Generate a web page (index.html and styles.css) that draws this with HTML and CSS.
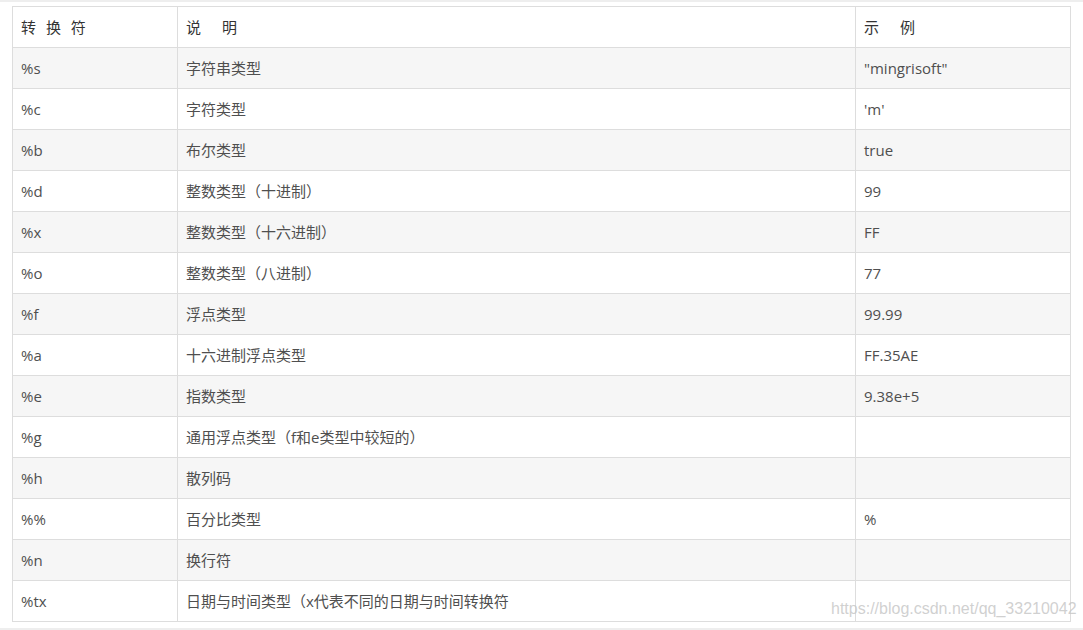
FILE: index.html
```html
<!DOCTYPE html>
<html lang="zh">
<head>
<meta charset="utf-8">
<link rel="stylesheet" href="styles.css">
</head>
<body>
<div class="page">
  <table class="fmt">
    <colgroup><col class="c1"><col class="c2"><col class="c3"></colgroup>
    <thead>
      <tr><th class="h1">转 换 符</th><th class="h2">说　 明</th><th class="h2">示　 例</th></tr>
    </thead>
    <tbody>
      <tr><td>%s</td><td>字符串类型</td><td>"mingrisoft"</td></tr>
      <tr><td>%c</td><td>字符类型</td><td>'m'</td></tr>
      <tr><td>%b</td><td>布尔类型</td><td>true</td></tr>
      <tr><td>%d</td><td>整数类型（十进制）</td><td>99</td></tr>
      <tr><td>%x</td><td>整数类型（十六进制）</td><td>FF</td></tr>
      <tr><td>%o</td><td>整数类型（八进制）</td><td>77</td></tr>
      <tr><td>%f</td><td>浮点类型</td><td>99.99</td></tr>
      <tr><td>%a</td><td>十六进制浮点类型</td><td>FF.35AE</td></tr>
      <tr><td>%e</td><td>指数类型</td><td>9.38e+5</td></tr>
      <tr><td>%g</td><td>通用浮点类型（f和e类型中较短的）</td><td></td></tr>
      <tr><td>%h</td><td>散列码</td><td></td></tr>
      <tr><td>%%</td><td>百分比类型</td><td>%</td></tr>
      <tr><td>%n</td><td>换行符</td><td></td></tr>
      <tr><td>%tx</td><td>日期与时间类型（x代表不同的日期与时间转换符</td><td></td></tr>
    </tbody>
  </table>
  <div class="watermark">https://blog.csdn.net/qq_33210042</div>
</div>
</body>
</html>
```

FILE: styles.css
```css
html, body {
  margin: 0;
  padding: 0;
  background: #ffffff;
}
.page {
  position: relative;
  width: 1083px;
  height: 630px;
  border-top: 2px solid #eeeeee;
  box-sizing: border-box;
  padding: 4px 0 0 12px;
}
.page::after {
  content: "";
  position: absolute;
  left: 0;
  right: 0;
  bottom: 0;
  height: 2px;
  background: #eeeeee;
}
.fmt {
  border-collapse: collapse;
  table-layout: fixed;
  width: 1058px;
  font-family: "Open Sans", "Noto Sans CJK SC", sans-serif;
  font-size: 15px;
  color: #4f4f4f;
}
.c1 { width: 165px; }
.c2 { width: 678px; }
.c3 { width: 215px; }
.fmt th, .fmt td {
  border: 1px solid #dddddd;
  height: 41px;
  box-sizing: border-box;
  padding: 0 8px;
  text-align: left;
  font-weight: normal;
  vertical-align: middle;
  white-space: pre;
  line-height: 20px;
}
.fmt th {
  color: #333333;
}
.fmt th.h1 {
  word-spacing: 6px;
}
.fmt th.h2 {
  word-spacing: 2px;
}
.fmt tbody tr:nth-child(odd) {
  background: #f6f6f6;
}
.watermark {
  position: absolute;
  left: 831px;
  top: 598px;
  font-family: "Liberation Sans", sans-serif;
  font-size: 16px;
  color: rgba(200, 200, 200, 0.85);
}
```
